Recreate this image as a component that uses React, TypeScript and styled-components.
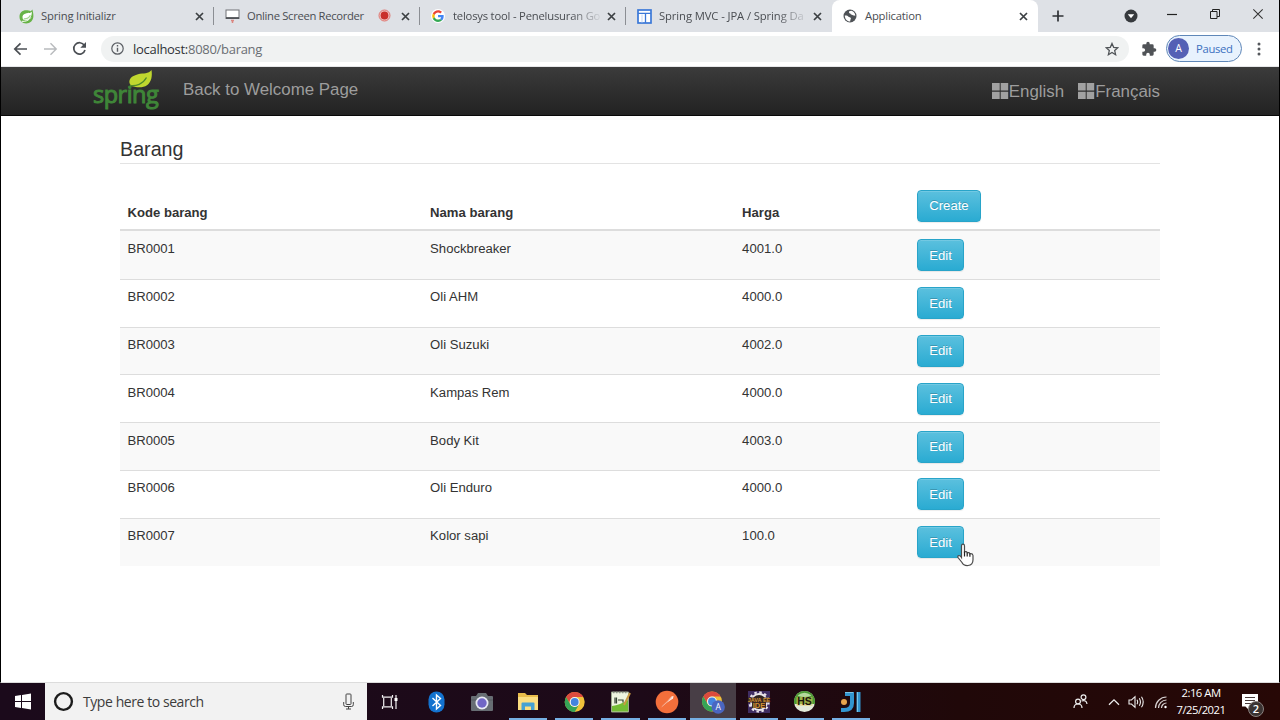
import React from 'react';
import styled, { createGlobalStyle } from 'styled-components';

const GlobalStyle = createGlobalStyle`
  * { box-sizing: border-box; }
  html, body { margin: 0; padding: 0; background: #fff; overflow: hidden; }
  svg { display: block; flex: none; }
`;

const ui = `'Open Sans', 'Noto Sans', sans-serif`;
const arial = `'Liberation Sans', Arial, sans-serif`;

const Screen = styled.div`
  width: 1280px;
  height: 720px;
  display: flex;
  flex-direction: column;
  overflow: hidden;
  background: #fff;
`;

const Window = styled.div`
  height: 683px;
  display: flex;
  flex-direction: column;
  border-left: 1px solid #000;
  border-right: 1px solid #000;
  border-bottom: 1px solid #dcdcdc;
`;

/* Tab strip */
const TabStrip = styled.div`
  height: 32px;
  display: flex;
  background: #dee1e6;
  padding-left: 7px;
  flex: none;
`;

const Tab = styled.div<{ $active?: boolean; $line?: boolean }>`
  width: 206px;
  height: 32px;
  display: flex;
  align-items: center;
  padding-left: 10px;
  position: relative;
  background: ${(p) => (p.$active ? '#fff' : 'transparent')};
  border-radius: 8px 8px 0 0;
  &::after {
    content: '';
    display: ${(p) => (p.$line ? 'block' : 'none')};
    position: absolute;
    right: 0;
    top: 7px;
    width: 1px;
    height: 18px;
    background: #8b8e93;
  }
`;

const TabIcon = styled.div`
  width: 16px;
  height: 16px;
  display: flex;
  align-items: center;
  justify-content: center;
  flex: none;
`;

const TabTitle = styled.div<{ $spacing?: number; $fade?: boolean }>`
  width: 147px;
  margin-left: 7px;
  font: 11.25px/16px ${ui};
  letter-spacing: ${(p) => p.$spacing ?? -0.2}px;
  color: #4a4d52;
  white-space: nowrap;
  ${(p) => p.$fade && 'mask-image: linear-gradient(90deg, #000 118px, transparent 150px);'}
`;

const TabClose = styled.div`
  width: 18px;
  margin-left: 2px;
  display: flex;
  justify-content: center;
`;

const Recording = styled.div`
  position: absolute;
  left: 164px;
  top: 9px;
`;

const StripControls = styled.div`
  flex: 1;
  display: flex;
  align-items: center;
`;

const Control = styled.div<{ $width: number }>`
  width: ${(p) => p.$width}px;
  display: flex;
  justify-content: center;
`;

const WindowButtons = styled.div`
  width: 106px;
  margin-left: -18px;
  display: flex;
  align-items: center;
  justify-content: space-between;
  padding: 0 8px 5px 1px;
`;

/* Address bar */
const Toolbar = styled.div`
  height: 35px;
  flex: none;
  display: flex;
  align-items: center;
  border-bottom: 1px solid #e6e7e9;
  padding: 0 0 1px 11px;
`;

const NavButtons = styled.div`
  width: 89px;
  display: flex;
  gap: 13px;
  align-items: center;
`;

const Omnibox = styled.div`
  width: 1028px;
  height: 26px;
  border-radius: 13px;
  background: #f0f2f2;
  display: flex;
  align-items: center;
  padding: 0 10px 0 10px;
`;

const Url = styled.div`
  flex: 1;
  margin-left: 9px;
  font: 13px/18px ${ui};
  letter-spacing: -0.29px;
  color: #6a6e73;
  span { color: #2f3236; }
`;

const Extensions = styled.div`
  margin-left: 12px;
  margin-right: 9px;
`;

const Profile = styled.div`
  width: 76px;
  height: 27px;
  border: 1px solid #5f87b8;
  border-radius: 14px;
  background: #e8f2fd;
  display: flex;
  align-items: center;
  padding-left: 1px;
  gap: 7px;
  font: 11.25px/16px ${ui};
  letter-spacing: -0.3px;
  color: #3b70c0;
`;

const Avatar = styled.div`
  width: 21px;
  height: 21px;
  border-radius: 50%;
  background: #5460b5;
  color: #fff;
  font: 10.5px/21px ${ui};
  text-align: center;
`;

const Menu = styled.div`
  margin-left: 15px;
`;

/* Application page */
const Navbar = styled.nav`
  height: 49px;
  flex: none;
  display: flex;
  align-items: center;
  padding: 0 119px 0 92px;
  background: linear-gradient(#3b3b3b, #222);
  border-bottom: 1px solid #080808;
  font: 16.9px/20px ${arial};
  color: #9d9d9d;
`;

const Logo = styled.div`
  width: 69px;
  height: 44px;
  position: relative;
  display: flex;
  align-items: flex-end;
  svg { position: absolute; left: 35px; top: 1px; }
`;

const LogoWord = styled.span`
  font: 23.5px/26px 'Open Sans', sans-serif;
  -webkit-text-stroke: 1px #3f8638;
  letter-spacing: -0.5px;
  color: #3f8638;
  padding-bottom: 6px;
`;

const Welcome = styled.a`
  flex: 1;
  margin-left: 21px;
  padding-bottom: 2px;
`;

const Language = styled.a`
  display: flex;
  align-items: center;
  margin-left: 14px;
  padding-top: 1px;
`;

const Page = styled.main`
  padding: 20px 119px 0;
  color: #333;
  font-family: ${arial};
`;

const Title = styled.h2`
  margin: 0 0 19px;
  height: 28px;
  border-bottom: 1px solid #e3e3e3;
  font: 19.7px/26px ${arial};
`;

const columns = '302.6px 312px 175px 1fr';

const HeadRow = styled.div`
  display: grid;
  grid-template-columns: ${columns};
  height: 48px;
  align-items: end;
  border-bottom: 2px solid #ddd;
  font: bold 13.12px/19px ${arial};
`;

const HeadCell = styled.div`
  padding: 0 7.5px 7.5px;
`;

const Row = styled.div<{ $striped: boolean; $first: boolean }>`
  display: grid;
  grid-template-columns: ${columns};
  height: 47.8px;
  border-top: ${(p) => (p.$first ? 0 : 1)}px solid #ddd;
  padding-top: ${(p) => (p.$first ? 1 : 0)}px;
  background: ${(p) => (p.$striped ? '#f9f9f9' : '#fff')};
  font: 13.12px/19px ${arial};
`;

const Cell = styled.div`
  padding: 7.35px 7.5px 0;
`;

const Button = styled.button`
  height: 32px;
  display: block;
  padding: 0 11.2px;
  border: 1px solid #28a4c9;
  border-radius: 4px;
  background: linear-gradient(#5bc0de, #2aabd2);
  box-shadow: inset 0 1px 0 rgba(255, 255, 255, 0.15), 0 1px 1px rgba(0, 0, 0, 0.075);
  text-shadow: 0 -1px 0 rgba(0, 0, 0, 0.2);
  font: 13.12px/19px ${arial};
  color: #fff;
`;

const Pointer = styled.div`
  position: absolute;
  left: 956px;
  top: 543px;
`;

/* Taskbar */
const Taskbar = styled.footer`
  height: 37px;
  display: flex;
  background: linear-gradient(90deg, #1b0a1b 0%, #1d0a18 50%, #200809 75%, #270806 100%);
  color: #fff;
`;

const Start = styled.div`
  width: 45px;
  display: flex;
  align-items: center;
  justify-content: center;
`;

const Search = styled.div`
  width: 322px;
  background: #f2f2f2;
  display: flex;
  align-items: center;
  padding: 0 13px 0 8px;
  font: 14px/20px ${ui};
  letter-spacing: -0.43px;
  color: #3c3c3c;
`;

const SearchText = styled.span`
  flex: 1;
  margin-left: 9px;
`;

const Apps = styled.div`
  width: 673px;
  display: flex;
`;

const TaskButton = styled.div<{ $running?: boolean; $active?: boolean }>`
  width: 46.1px;
  display: flex;
  align-items: center;
  justify-content: center;
  background: ${(p) => (p.$active ? '#483e46' : 'transparent')};
  position: relative;
  &::after {
    content: '';
    display: ${(p) => (p.$running ? 'block' : 'none')};
    position: absolute;
    bottom: 0;
    left: ${(p) => (p.$active ? 0 : 4)}px;
    right: ${(p) => (p.$active ? 0 : 4)}px;
    height: 2px;
    background: #76b0e4;
  }
`;

const Tray = styled.div`
  flex: 1;
  display: flex;
  align-items: center;
  padding-left: 33px;
`;

const TrayIcon = styled.div<{ $gap: number }>`
  margin-right: ${(p) => p.$gap}px;
`;

const Clock = styled.div`
  width: 50px;
  font: 11.3px/17px ${ui};
  letter-spacing: -0.5px;
  white-space: nowrap;
  display: flex;
  flex-direction: column;
  align-items: center;
  padding-bottom: 1px;
`;

const Notices = styled.div`
  position: relative;
  margin-left: 16px;
`;

const NoticeCount = styled.span`
  position: absolute;
  left: 6px;
  top: 7px;
  width: 16px;
  height: 16px;
  border-radius: 50%;
  border: 1px solid #8a8280;
  background: #3a3332;
  font: 600 11px/14px ${ui};
  text-align: center;
`;

const CloseX = ({ size = 9, width = 1.7, color = '#3c4043' }) => (
  <svg width={size} height={size} viewBox="0 0 9 9">
    <path d="M1 1l7 7M8 1L1 8" stroke={color} strokeWidth={width} />
  </svg>
);

const SpringIcon = () => (
  <svg width="15" height="15" viewBox="0 0 15 15">
    <path d="M13.400.6c.3 1.300 1 3.700 1 6.400 0 4.500-3.200 7.400-7.200 7.400C3.300 14.400.5 11.500.5 7.700.5 4 3.300 1.300 7 1.300c2 0 3.500.2 4.800 1z" fill="#67b346" />
    <path d="M12.800 2.800c-1 1.300-3.300 1.200-5.300 1.500C4.300 4.800 3 7 3.600 9.200c.3 1 1 1.700 2 2 3.700.6 7.400-2.200 7.200-8.400z" fill="#fff" />
    <path d="M2.800 12.300c3.500.5 7-.8 9-3.800" stroke="#fff" fill="none" />
    <path d="M4.800 9.800c3 .2 5.200-1 6.600-3.600" stroke="#a5d48f" strokeWidth="1.300" fill="none" />
  </svg>
);

const RecorderIcon = () => (
  <svg width="15" height="15" viewBox="0 0 15 15">
    <rect x="1" y="1" width="13" height="8.500" fill="#fff" stroke="#707276" strokeWidth="1" />
    <path d="M1 9h13" stroke="#505256" strokeWidth="1.800" />
    <path d="M6 11.500h3M7.500 11v3" stroke="#db8680" strokeWidth="1.500" />
  </svg>
);

const GoogleIcon = () => (
  <svg width="14" height="14" viewBox="0 0 48 48">
    <circle cx="24" cy="24" r="24" fill="#fff" />
    <g transform="translate(4 4) scale(.84)">
      <path fill="#EA4335" d="M24 9.500c3.540 0 6.710 1.220 9.210 3.600l6.850-6.850C35.900 2.380 30.470 0 24 0 14.620 0 6.510 5.380 2.560 13.220l7.980 6.190C12.430 13.720 17.740 9.500 24 9.500z" />
      <path fill="#4285F4" d="M46.980 24.550c0-1.570-.15-3.090-.38-4.550H24v9.020h12.940c-.58 2.960-2.260 5.480-4.780 7.180l7.730 6c4.510-4.180 7.090-10.360 7.090-17.650z" />
      <path fill="#FBBC05" d="M10.530 28.590a14.500 14.500 0 010-9.180l-7.980-6.190a24 24 0 000 21.560z" />
      <path fill="#34A853" d="M24 48c6.480 0 11.930-2.130 15.890-5.810l-7.730-6C30 37.640 27.240 38.490 24 38.490c-6.260 0-11.570-4.220-13.470-9.910l-7.980 6.190C6.510 42.620 14.620 48 24 48z" />
    </g>
  </svg>
);

const PanelIcon = () => (
  <svg width="15" height="15" viewBox="0 0 15 15">
    <rect x="1" y="1" width="13" height="13" fill="#fff" stroke="#3b78d8" strokeWidth="1.700" />
    <path d="M1 4.300h13M8.500 4v10" stroke="#3b78d8" strokeWidth="1.300" />
    <path d="M5 5.500v8" stroke="#c4d7f4" />
  </svg>
);

const GlobeIcon = () => (
  <svg width="14" height="14" viewBox="0 0 14 14">
    <circle cx="7" cy="7" r="6.500" fill="#4e5256" />
    <path d="M1.800 6.400c2.100-.1 3.100.4 3.700 1.400.5.700 1.900.2 2.300 1.200.4 1-.6 1.500-.6 3.400-3.200 0-5.400-2.600-5.400-6zM6.200 2.200c-.5 1.300-.1 2 .9 2.200.9.100.4 1 1.200 1.200.8.200 1.400 1 2.400 1 .8-.1 1.500.2 1.500.9.400-3-1.500-5.300-4-5.700z" fill="#fff" />
  </svg>
);

const Pane = () => (
  <svg width="17" height="17" viewBox="0 0 17 17" fill="#a1a1a1">
    <path d="M0 0h7.700v7.500H0zM8.700 0h7.500v7.500H8.700zM0 8.700h7.700V16H0zM8.700 8.700h7.500V16H8.700z" />
  </svg>
);

const ChromeIcon = ({ badge = false }: { badge?: boolean }) => (
  <svg width="24" height="24" viewBox="0 0 24 24">
    <g transform={badge ? 'translate(0 0)' : 'translate(1.700 .5)'}>
      <circle cx="11" cy="11.500" r="10" fill="#efc13a" />
      <path d="M2.340 6.500A10 10 0 0119.660 6.500H11a5 5 0 00-4.330 7.500z" fill="#dc4b3e" />
      <path d="M2.340 6.500A10 10 0 0011 21.500l4.330-7.500a5 5 0 01-8.660 0z" fill="#36a457" />
      <circle cx="11" cy="11.500" r="5" fill="#f3f3f3" />
      <circle cx="11" cy="11.500" r="3.900" fill="#4484e0" />
    </g>
    {badge && (
      <>
        <circle cx="17.200" cy="17" r="6.700" fill="#4a66c0" />
        <text x="17.200" y="20" textAnchor="middle" fontFamily="Open Sans, sans-serif" fontSize="8.500" fill="#fff">A</text>
      </>
    )}
  </svg>
);

const taskApps = [
  { icon: (
    <svg width="18" height="16" viewBox="0 0 18 16" fill="none" stroke="#f0eef0" strokeWidth="1.200">
      <path d="M1.500 1v2.200h10V1M1.500 15v-2.200h10V15M2.700 4v8M10.300 4v8M15 1v14" />
      <path d="M13.500 4h3v3h-3z" fill="#fff" stroke="none" />
    </svg>) },
  { icon: (
    <svg width="17" height="22" viewBox="0 0 17 22">
      <rect x=".5" y=".5" width="16" height="21" rx="8" fill="#1372cf" />
      <path d="M4.500 7l8 7.500-4 3.500V4l4 3.500-8 7.500" fill="none" stroke="#fff" strokeWidth="1.400" />
    </svg>) },
  { icon: (
    <svg width="24" height="20" viewBox="0 0 24 20">
      <path d="M2 4h4l2-3h8l2 3h4a1 1 0 011 1v13a1 1 0 01-1 1H2a1 1 0 01-1-1V5a1 1 0 011-1z" fill="#676d73" />
      <path d="M1 8h22" stroke="#565c61" />
      <circle cx="12" cy="11" r="6.500" fill="#e8e9f3" />
      <circle cx="12" cy="11" r="4.700" fill="#7166c5" />
    </svg>) },
  { run: true, icon: (
    <svg width="22" height="19" viewBox="0 0 22 19">
      <path d="M1 1h7l2 2h11v15H1z" fill="#e9bc4b" />
      <path d="M1 5h20v13H1z" fill="#fbdd80" />
      <path d="M4.500 18v-6.500a1 1 0 011-1h11a1 1 0 011 1V18h-3.500v-3.500H8V18z" fill="#45a1d3" />
    </svg>) },
  { run: true, icon: <ChromeIcon /> },
  { run: true, icon: (
    <svg width="22" height="23" viewBox="0 0 22 23">
      <path d="M1.500 2h17v20h-17z" fill="#eef4df" stroke="#9aa48c" />
      <path d="M2 16q8-1 16-6v11.500H2z" fill="#73bc35" />
      <path d="M3 2.500h14" stroke="#8c9388" strokeWidth="1.500" strokeDasharray="1.500 1.500" />
      <path d="M5 7.500v6M6.500 7.500v6M8 10h5v2.500" fill="none" stroke="#344233" strokeWidth="1.200" />
      <path d="M20 3l-6 12" stroke="#c99a43" strokeWidth="2" />
    </svg>) },
  { run: true, icon: (
    <svg width="24" height="24" viewBox="0 0 24 24">
      <circle cx="12" cy="12" r="11.300" fill="#f36f3b" />
      <path d="M5.500 18l7-7 4-4.500 2-.5-.5 2.500-6 4-6.500 5.500z" fill="#fff" />
      <path d="M7 16.500L17.500 7" stroke="#f3a080" strokeWidth=".8" />
    </svg>) },
  { run: true, active: true, icon: <ChromeIcon badge /> },
  { run: true, icon: (
    <svg width="24" height="24" viewBox="0 0 24 24">
      <rect x="1" y="1" width="22" height="22" fill="#3f2d62" />
      <circle cx="12" cy="12" r="8" fill="#2b211e" stroke="#e9e4ea" strokeWidth="2" />
      <circle cx="12" cy="12" r="9.700" fill="none" stroke="#e9e4ea" strokeWidth="2" strokeDasharray="2.500 2.580" />
      <path d="M1 7.500h22v5H1zM5 12h14v6H5z" fill="#3c2922" />
      <text x="12" y="12" textAnchor="middle" fontFamily="Liberation Sans, sans-serif" fontWeight="bold" fontSize="5.500" fill="#d19332">JAVA EE</text>
      <text x="12" y="18" textAnchor="middle" fontFamily="Liberation Sans, sans-serif" fontWeight="bold" fontSize="7.500" fill="#d19332">IDE</text>
    </svg>) },
  { run: true, icon: (
    <svg width="23" height="23" viewBox="0 0 23 23">
      <circle cx="11.500" cy="11.500" r="10.500" fill="#e4ebdc" />
      <path d="M1.300 14a10.500 10.500 0 1120.400 0z" fill="#4c9a34" />
      <path d="M4.500 5.500q7-5.500 14 0-7 3-14 0z" fill="#b5d99d" />
      <path d="M3.500 6.800h16v9h-16z" fill="#e2c95a" opacity=".55" />
      <text x="11.500" y="15.300" textAnchor="middle" fontFamily="Liberation Sans, sans-serif" fontWeight="bold" fontSize="10.500" fill="#1b160b">HS</text>
    </svg>) },
  { run: true, icon: (
    <svg width="22" height="22" viewBox="0 0 22 22">
      <path d="M5 3h7v9q0 7-8 7H1" fill="none" stroke="#3295cf" strokeWidth="4" />
      <path d="M18.500 1v20" stroke="#3295cf" strokeWidth="4" />
      <path d="M5 1.500h8M17.500 1v20" stroke="#79c5e9" />
      <circle cx="4" cy="11" r="3" fill="#e8a44b" />
    </svg>) },
];

const items = [
  ['BR0001', 'Shockbreaker', '4001.0'],
  ['BR0002', 'Oli AHM', '4000.0'],
  ['BR0003', 'Oli Suzuki', '4002.0'],
  ['BR0004', 'Kampas Rem', '4000.0'],
  ['BR0005', 'Body Kit', '4003.0'],
  ['BR0006', 'Oli Enduro', '4000.0'],
  ['BR0007', 'Kolor sapi', '100.0'],
];

const tabs = [
  { icon: <SpringIcon />, title: 'Spring Initializr', line: true, spacing: -0.2 },
  { icon: <RecorderIcon />, title: 'Online Screen Recorder', line: true, rec: true, spacing: -0.32 },
  { icon: <GoogleIcon />, title: 'telosys tool - Penelusuran Go', line: true, fade: true, spacing: -0.2 },
  { icon: <PanelIcon />, title: 'Spring MVC - JPA / Spring Da', fade: true, spacing: -0.1 },
  { icon: <GlobeIcon />, title: 'Application', active: true, spacing: -0.2 },
];

export default function App() {
  return (
    <Screen>
      <GlobalStyle />
      <Window>
        <TabStrip>
          {tabs.map((t) => (
            <Tab key={t.title} $active={t.active} $line={t.line}>
              <TabIcon>{t.icon}</TabIcon>
              <TabTitle $spacing={t.spacing} $fade={t.fade}>{t.title}</TabTitle>
              {t.rec && (
                <Recording>
                  <svg width="13" height="13" viewBox="0 0 13 13">
                    <circle cx="6.500" cy="6.500" r="5.500" fill="#eec7c5" stroke="#dc6a64" strokeWidth=".9" />
                    <circle cx="6.500" cy="6.500" r="3.900" fill="#c9302a" />
                  </svg>
                </Recording>
              )}
              <TabClose><CloseX /></TabClose>
            </Tab>
          ))}
          <StripControls>
            <Control $width={40}>
              <svg width="12" height="12" viewBox="0 0 12 12"><path d="M6 .5v11M.5 6h11" stroke="#2f3236" strokeWidth="1.700" /></svg>
            </Control>
            <Control $width={106}>
              <svg width="14" height="14" viewBox="0 0 14 14">
                <circle cx="7" cy="7" r="6.500" fill="#36393d" />
                <path d="M3.800 5.300h6.400L7 9.300z" fill="#fff" />
              </svg>
            </Control>
            <WindowButtons>
              <svg width="10" height="10" viewBox="0 0 10 10"><path d="M0 5.500h10" stroke="#222" strokeWidth="1.200" /></svg>
              <svg width="10" height="10" viewBox="0 0 10 10" fill="none" stroke="#222"><path d="M.5 2.500h6.500v7H.5zM2.500 2.500v-2h7v7H7" /></svg>
              <CloseX size={12} width={0.8} color="#333" />
            </WindowButtons>
          </StripControls>
        </TabStrip>
        <Toolbar>
          <NavButtons>
            <svg width="17" height="14" viewBox="0 0 17 14" fill="none" stroke="#4b4f54" strokeWidth="1.700"><path d="M15 7H3M8.500 1.300L2.800 7l5.700 5.700" /></svg>
            <svg width="17" height="14" viewBox="0 0 17 14" fill="none" stroke="#b8babd" strokeWidth="1.400"><path d="M2 7h12M8.500 1.300L14.200 7l-5.700 5.700" /></svg>
            <svg width="15" height="15" viewBox="0 0 15 15"><path d="M12.300 4.300A5.700 5.700 0 1013 9" fill="none" stroke="#4b4f54" strokeWidth="1.700" /><path d="M14 1v5.700H8.300z" fill="#4b4f54" /></svg>
          </NavButtons>
          <Omnibox>
            <svg width="13" height="13" viewBox="0 0 13 13">
              <circle cx="6.500" cy="6.500" r="5.700" fill="none" stroke="#5a5e63" strokeWidth="1.200" />
              <path d="M6.500 5.700v4M6.500 3v1.500" stroke="#5a5e63" strokeWidth="1.400" />
            </svg>
            <Url><span>localhost:</span>8080/barang</Url>
            <svg width="14" height="14" viewBox="0 0 24 24"><path d="M12 2.500l2.900 6.700 7.100.7-5.400 4.800 1.600 7.100-6.200-3.800-6.200 3.800 1.600-7.100L2 9.900l7.100-.7z" fill="none" stroke="#4f5357" strokeWidth="2.200" /></svg>
          </Omnibox>
          <Extensions>
            <svg width="16" height="16" viewBox="0 0 24 24" fill="#505357"><path d="M20.500 11H19V7a2 2 0 00-2-2h-4V3.500a2.500 2.500 0 00-5 0V5H4a2 2 0 00-2 2v3.800h1.500a2.700 2.700 0 010 5.400H2V20a2 2 0 002 2h3.800v-1.500a2.700 2.700 0 015.400 0V22H17a2 2 0 002-2v-4h1.500a2.500 2.500 0 000-5z" /></svg>
          </Extensions>
          <Profile><Avatar>A</Avatar>Paused</Profile>
          <Menu>
            <svg width="4" height="14" viewBox="0 0 4 14" fill="#55585c"><circle cx="2" cy="2" r="1.500" /><circle cx="2" cy="7" r="1.500" /><circle cx="2" cy="12" r="1.500" /></svg>
          </Menu>
        </Toolbar>
        <Navbar>
          <Logo>
            <LogoWord>spring</LogoWord>
            <svg width="25" height="20" viewBox="0 0 25 20">
              <path d="M23.500 0c-3 4-8 3-13.500 4.200C4 5.700.8 8.700 1.500 13c.5 1.500 1.500 2.500 2.500 3 5 1.800 11 2 15-.7C23.500 12 24.500 6 23.500 0z" fill="#c0d72f" />
              <path d="M2 15.500c6 1 13-1.500 16.500-8" fill="none" stroke="#4f8a2a" strokeWidth="1.300" />
            </svg>
          </Logo>
          <Welcome>Back to Welcome Page</Welcome>
          <Language><Pane />English</Language>
          <Language><Pane />Français</Language>
        </Navbar>
        <Page>
          <Title>Barang</Title>
          <HeadRow>
            <HeadCell>Kode barang</HeadCell>
            <HeadCell>Nama barang</HeadCell>
            <HeadCell>Harga</HeadCell>
            <HeadCell><Button>Create</Button></HeadCell>
          </HeadRow>
          {items.map(([code, name, price], i) => (
            <Row key={code} $striped={i % 2 === 0} $first={i === 0}>
              <Cell>{code}</Cell>
              <Cell>{name}</Cell>
              <Cell>{price}</Cell>
              <Cell><Button>Edit</Button></Cell>
            </Row>
          ))}
        </Page>
      </Window>
      <Pointer>
        <svg width="19" height="24" viewBox="0 0 19 24">
          <path d="M5.500 14.500V3q0-1.800 1.500-1.800T8.500 3v6q2-1 2.700.8 2-.8 2.600 1 2.800-.5 3.200 1.700v4.200q0 5.300-5 5.800-4.500.3-6-3l-4-5q-.6-1.800 1-2 1.300 0 2.500 2z" fill="#fff" stroke="#4b4b4b" strokeWidth="1.200" />
          <path d="M8.500 8.500v5M11.200 9.800v3.700M13.900 10.800v3" stroke="#222" strokeWidth="1.200" />
        </svg>
      </Pointer>
      <Taskbar>
        <Start>
          <svg width="16" height="17" viewBox="0 0 16 17" fill="#fff"><path d="M0 3l6-.9V8H0zM7 1.900L16 .5V8H7zM0 9h6v5.900L0 14zM7 9h9v7.500l-9-1.400z" /></svg>
        </Start>
        <Search>
          <svg width="21" height="21" viewBox="0 0 21 21"><circle cx="10.500" cy="10.500" r="8.400" fill="none" stroke="#1c1c1c" strokeWidth="2.400" /></svg>
          <SearchText>Type here to search</SearchText>
          <svg width="11" height="17" viewBox="0 0 11 17" fill="none" stroke="#444"><rect x="3" y="1" width="5" height="10.500" rx=".8" /><path d="M.7 9v2.700q0 1.800 1.800 1.800h6q1.800 0 1.800-1.800V9M5.500 13.500v2.500M3 16h5" /></svg>
        </Search>
        <Apps>
          {taskApps.map((a, i) => (
            <TaskButton key={i} $running={a.run} $active={a.active}>{a.icon}</TaskButton>
          ))}
        </Apps>
        <Tray>
          <TrayIcon $gap={20}>
            <svg width="15" height="15" viewBox="0 0 15 15" fill="none" stroke="#eee" strokeWidth="1.200"><circle cx="10.500" cy="3.200" r="2.400" /><circle cx="5" cy="7.500" r="2.400" /><path d="M1 14q0-4 4-4t4 4M8.500 7q5-1.500 5.500 3" /></svg>
          </TrayIcon>
          <TrayIcon $gap={8}>
            <svg width="12" height="8" viewBox="0 0 12 8" fill="none" stroke="#eee" strokeWidth="1.300"><path d="M1 6.800l5-5 5 5" /></svg>
          </TrayIcon>
          <TrayIcon $gap={9}>
            <svg width="17" height="14" viewBox="0 0 17 14" fill="none" stroke="#eee" strokeWidth="1.100"><path d="M1 5v4h2.500L7 12.300V1.700L3.500 5zM9 4.800q1.300 2.200 0 4.400M11.300 3.300q2.300 3.700 0 7.400M13.500 1.700q3.400 5.300 0 10.600" /></svg>
          </TrayIcon>
          <TrayIcon $gap={8}>
            <svg width="14" height="14" viewBox="0 0 14 14" fill="none" stroke="#d8d2d2" strokeWidth="1.200"><path d="M1.500 13A11 11 0 0112.500 2M4.500 13a8 8 0 018-8M7.500 13a5 5 0 015-5" /><circle cx="11.500" cy="12" r="1.200" fill="#fff" stroke="none" /></svg>
          </TrayIcon>
          <Clock><span>2:16 AM</span><span>7/25/2021</span></Clock>
          <Notices>
            <svg width="16" height="16" viewBox="0 0 16 16"><path d="M0 0h16v12.500H7V16l-3.500-3.500H0z" fill="#fff" /><path d="M3 3.500h10M3 6.500h10M3 9.500h6" stroke="#4b3b3a" /></svg>
            <NoticeCount>2</NoticeCount>
          </Notices>
        </Tray>
      </Taskbar>
    </Screen>
  );
}
